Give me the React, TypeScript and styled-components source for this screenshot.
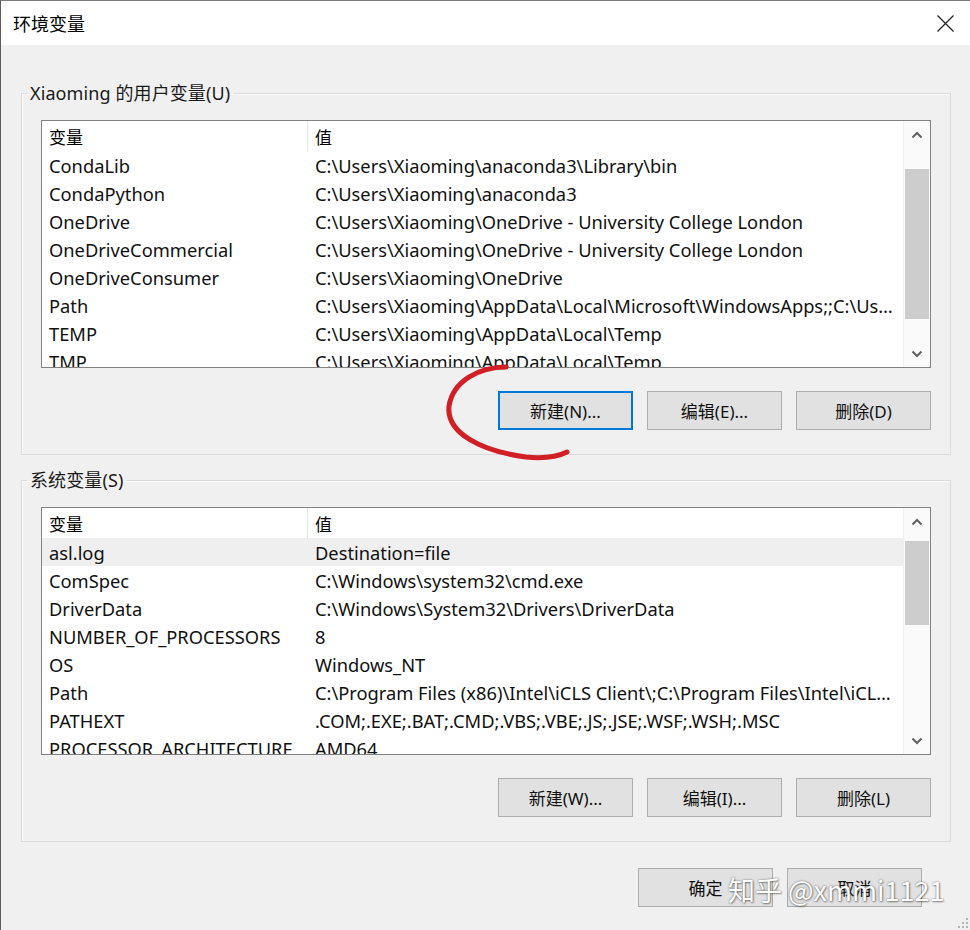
import React from "react";
import styled, { createGlobalStyle } from "styled-components";

const GlobalStyle = createGlobalStyle`
  html, body { margin: 0; padding: 0; background: #f0f0f0; }
  body { width: 970px; height: 930px; overflow: hidden; }
  * { box-sizing: border-box; }
`;

const UI_FONT = `"Noto Sans", "Noto Sans CJK SC", sans-serif`;

const Window = styled.div`
  position: relative;
  width: 970px;
  height: 930px;
  display: flex;
  flex-direction: column;
  background: #f0f0f0;
  border-left: 1px solid #5c5c5c;
  border-top: 1px solid #7a7a7a;
  font-family: ${UI_FONT};
  color: #000;
  overflow: hidden;
`;

const TitleBar = styled.div`
  height: 44px;
  flex: none;
  background: #fff;
  display: flex;
  align-items: center;
  justify-content: space-between;
  padding: 0 16px 0 12px;
`;

const Title = styled.div`
  font-size: 18px;
  font-family: "Noto Sans CJK SC", sans-serif;
  color: #000;
`;

const CloseButton = styled.div`
  width: 18px;
  height: 18px;
  display: flex;
  align-items: center;
  justify-content: center;
`;

const Body = styled.div`
  flex: 1;
  display: flex;
  flex-direction: column;
  padding: 36px 19px 0 20px;
`;

const Group = styled.fieldset<{ $gapTop?: number }>`
  margin: ${(p) => p.$gapTop ?? 0}px 0 0 0;
  padding: 15px 19px 24px 19px;
  border: 1px solid #dadada;
  box-shadow: inset 1px 1px 0 #fbfbfb;
  min-width: 0;
  display: flex;
  flex-direction: column;
`;

const Legend = styled.legend`
  font-size: 18px;
  line-height: 24px;
  padding: 0 3px;
  margin-left: -14px;
  color: #1a1a1a;
  letter-spacing: 0.1px;
`;

const ListBox = styled.div`
  height: 248px;
  border: 1px solid #828282;
  background: #fff;
  display: flex;
  overflow: hidden;
`;

const ListContent = styled.div`
  flex: 1;
  min-width: 0;
  display: flex;
  flex-direction: column;
  overflow: hidden;
`;

const HeaderRow = styled.div`
  height: 30px;
  flex: none;
  display: grid;
  grid-template-columns: 266px 1fr;
  align-items: center;
`;

const HeaderCell = styled.div<{ $divider?: boolean }>`
  height: 100%;
  display: flex;
  align-items: center;
  padding-left: 7px;
  font-size: 17px;
  font-family: "Noto Sans CJK SC", sans-serif;
  border-right: ${(p) => (p.$divider ? "1px solid #e5e5e5" : "none")};
`;

const Row = styled.div<{ $selected?: boolean }>`
  height: 28px;
  flex: none;
  display: grid;
  grid-template-columns: 266px 1fr;
  align-items: center;
  background: ${(p) => (p.$selected ? "#efefef" : "transparent")};
`;

const Cell = styled.div`
  padding: 1px 8px 0 7px;
  font-size: 18.3px;
  line-height: 27px;
  white-space: nowrap;
  overflow: hidden;
  text-overflow: ellipsis;
  color: #111;
`;

const ScrollBar = styled.div`
  width: 27px;
  flex: none;
  display: flex;
  flex-direction: column;
  background: #fafafa;
  border-left: 1px solid #f0f0f0;
`;

const ScrollArrow = styled.div`
  height: 27px;
  flex: none;
  display: flex;
  align-items: center;
  justify-content: center;
`;

const ScrollTrack = styled.div`
  flex: 1;
  display: flex;
  flex-direction: column;
  padding: 0 1px;
`;

const ScrollThumb = styled.div<{ $top: number; $height: number }>`
  margin-top: ${(p) => p.$top}px;
  height: ${(p) => p.$height}px;
  background: #cdcdcd;
`;

const ButtonRow = styled.div<{ $top: number; $right?: number }>`
  display: flex;
  justify-content: flex-end;
  gap: 14px;
  margin-top: ${(p) => p.$top}px;
  padding-right: ${(p) => p.$right ?? 0}px;
`;

const Button = styled.div<{ $focused?: boolean }>`
  width: 135px;
  height: 39px;
  display: flex;
  align-items: center;
  justify-content: center;
  background: #e1e1e1;
  border: ${(p) => (p.$focused ? "2px solid #0078d7" : "1px solid #adadad")};
  font-size: 17px;
  color: #111;
`;

const Annotation = styled.svg`
  position: absolute;
  left: 0;
  top: 0;
  width: 970px;
  height: 930px;
  pointer-events: none;
`;

const Watermark = styled.div`
  position: absolute;
  left: 727px;
  top: 869px;
  font-family: "Noto Sans CJK SC", sans-serif;
  font-size: 27px;
  color: #fff;
  text-shadow: 0 0 2px rgba(0, 0, 0, 0.55), 1px 1px 2px rgba(0, 0, 0, 0.35);
  pointer-events: none;
  white-space: nowrap;
`;

const Grip = styled.svg`
  position: absolute;
  right: 2px;
  bottom: 2px;
`;

type Variable = [string, string];

const userVars: Variable[] = [
  ["CondaLib", "C:\\Users\\Xiaoming\\anaconda3\\Library\\bin"],
  ["CondaPython", "C:\\Users\\Xiaoming\\anaconda3"],
  ["OneDrive", "C:\\Users\\Xiaoming\\OneDrive - University College London"],
  ["OneDriveCommercial", "C:\\Users\\Xiaoming\\OneDrive - University College London"],
  ["OneDriveConsumer", "C:\\Users\\Xiaoming\\OneDrive"],
  ["Path", "C:\\Users\\Xiaoming\\AppData\\Local\\Microsoft\\WindowsApps;;C:\\Users\\Xiaoming\\AppData"],
  ["TEMP", "C:\\Users\\Xiaoming\\AppData\\Local\\Temp"],
  ["TMP", "C:\\Users\\Xiaoming\\AppData\\Local\\Temp"],
];

const systemVars: Variable[] = [
  ["asl.log", "Destination=file"],
  ["ComSpec", "C:\\Windows\\system32\\cmd.exe"],
  ["DriverData", "C:\\Windows\\System32\\Drivers\\DriverData"],
  ["NUMBER_OF_PROCESSORS", "8"],
  ["OS", "Windows_NT"],
  ["Path", "C:\\Program Files (x86)\\Intel\\iCLS Client\\;C:\\Program Files\\Intel\\iCLS Client\\"],
  ["PATHEXT", ".COM;.EXE;.BAT;.CMD;.VBS;.VBE;.JS;.JSE;.WSF;.WSH;.MSC"],
  ["PROCESSOR_ARCHITECTURE", "AMD64"],
];

const Chevron = ({ up }: { up?: boolean }) => (
  <svg width="12" height="8" viewBox="0 0 12 8">
    <path
      d={up ? "M1.5 6.5 L6 2 L10.5 6.5" : "M1.5 1.5 L6 6 L10.5 1.5"}
      fill="none"
      stroke="#606060"
      strokeWidth="2"
    />
  </svg>
);

const VariableList = ({
  rows,
  selected,
  thumbTop,
  thumbHeight,
}: {
  rows: Variable[];
  selected?: number;
  thumbTop: number;
  thumbHeight: number;
}) => (
  <ListBox>
    <ListContent>
      <HeaderRow>
        <HeaderCell $divider>变量</HeaderCell>
        <HeaderCell>值</HeaderCell>
      </HeaderRow>
      {rows.map(([name, value], i) => (
        <Row key={name + i} $selected={i === selected}>
          <Cell>{name}</Cell>
          <Cell>{value}</Cell>
        </Row>
      ))}
    </ListContent>
    <ScrollBar>
      <ScrollArrow>
        <Chevron up />
      </ScrollArrow>
      <ScrollTrack>
        <ScrollThumb $top={thumbTop} $height={thumbHeight} />
      </ScrollTrack>
      <ScrollArrow>
        <Chevron />
      </ScrollArrow>
    </ScrollBar>
  </ListBox>
);

export default function App() {
  return (
    <>
      <GlobalStyle />
      <Window>
        <TitleBar>
          <Title>环境变量</Title>
          <CloseButton>
            <svg width="17" height="17" viewBox="0 0 17 17">
              <path d="M0.5 0.5 L16.5 16.5 M16.5 0.5 L0.5 16.5" stroke="#222" strokeWidth="1.2" />
            </svg>
          </CloseButton>
        </TitleBar>
        <Body>
          <Group>
            <Legend>Xiaoming 的用户变量(U)</Legend>
            <VariableList rows={userVars} thumbTop={21} thumbHeight={150} />
            <ButtonRow $top={23}>
              <Button $focused>新建(N)...</Button>
              <Button>编辑(E)...</Button>
              <Button>删除(D)</Button>
            </ButtonRow>
          </Group>
          <Group $gapTop={13}>
            <Legend>系统变量(S)</Legend>
            <VariableList rows={systemVars} selected={0} thumbTop={6} thumbHeight={84} />
            <ButtonRow $top={23}>
              <Button>新建(W)...</Button>
              <Button>编辑(I)...</Button>
              <Button>删除(L)</Button>
            </ButtonRow>
          </Group>
          <ButtonRow $top={26} $right={29}>
            <Button>确定</Button>
            <Button>取消</Button>
          </ButtonRow>
        </Body>
        <Annotation viewBox="0 0 970 930">
          <path
            d="M505 366 C 478 366, 452 380, 448 405 C 445 432, 480 450, 525 456 C 545 458, 558 455, 566 451"
            fill="none"
            stroke="#d21f26"
            strokeWidth="5"
            strokeLinecap="round"
          />
        </Annotation>
        <Watermark>知乎 @xmmi1121</Watermark>
        <Grip width="10" height="10" viewBox="0 0 10 10">
          {[
            [8, 0],
            [8, 4],
            [4, 4],
            [8, 8],
            [4, 8],
            [0, 8],
          ].map(([x, y]) => (
            <rect key={`${x}-${y}`} x={x} y={y} width="2" height="2" fill="#b4b4b4" />
          ))}
        </Grip>
      </Window>
    </>
  );
}
